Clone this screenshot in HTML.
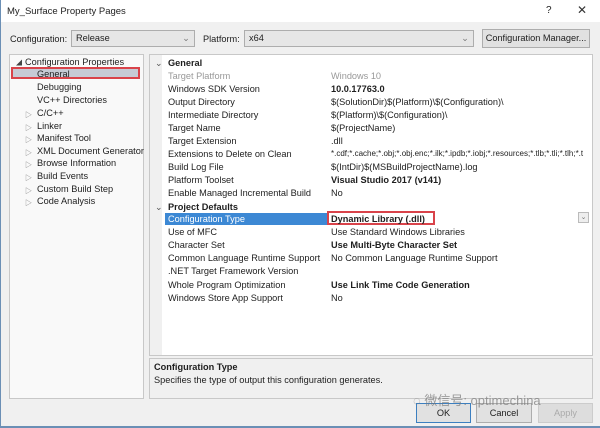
<!DOCTYPE html>
<html><head><meta charset="utf-8"><style>
*{margin:0;padding:0;box-sizing:border-box}
body{width:600px;height:428px;background:#f0f0f0;font-family:"Liberation Sans","Noto Sans CJK SC",sans-serif;font-size:9.2px;color:#1e1e1e;position:relative;overflow:hidden;border-left:1px solid #6b8fb5;border-bottom:2px solid #6b8fb5}
.a{position:absolute;white-space:nowrap}
.box{position:absolute;border:1px solid #c8c8c8}
.combo{position:absolute;background:#e6e6e6;border:1px solid #adadad;height:17px;padding:2px 4px}
.btn{position:absolute;background:#e1e1e1;border:1px solid #adadad;text-align:center;line-height:18px;height:20px}
.r{position:absolute;left:167px;white-space:nowrap}
.v{position:absolute;left:330px;white-space:nowrap}
b{font-weight:bold}
.t{position:absolute;left:36px;white-space:nowrap}
.tri{position:absolute;left:24px;color:#777;font-size:7px}
</style></head><body>
<div class="a" style="left:0;top:0;width:600px;height:22px;background:#fff"></div>
<div class="a" style="left:6px;top:6px;font-size:9.5px">My_Surface Property Pages</div>
<div class="a" style="left:545px;top:5px;font-size:10px">?</div>
<div class="a" style="left:576px;top:3px;font-size:12px;color:#333">✕</div>

<div class="a" style="left:9px;top:34px">Configuration:</div>
<div class="combo" style="left:70px;top:30px;width:124px">Release<span style="position:absolute;right:4px;color:#777">⌄</span></div>
<div class="a" style="left:202px;top:34px">Platform:</div>
<div class="combo" style="left:243px;top:30px;width:230px">x64<span style="position:absolute;right:4px;color:#777">⌄</span></div>
<div class="btn" style="left:481px;top:29px;width:108px;height:19px;line-height:17px">Configuration Manager...</div>

<div class="box" style="left:8px;top:54px;width:135px;height:345px;background:#f9f9f9"></div>
<div class="a" style="left:15px;top:58px;font-size:6px;color:#444">◢</div>
<div class="a" style="left:24px;top:57px">Configuration Properties</div>
<div class="a" style="left:10px;top:67px;width:129px;height:12px;background:#c6cbd5;border:2px solid #d9434a"></div>
<div class="t" style="top:69px">General</div>
<div class="t" style="top:82px">Debugging</div>
<div class="t" style="top:95px">VC++ Directories</div>
<div class="tri" style="top:110px">▷</div><div class="t" style="top:108px">C/C++</div>
<div class="tri" style="top:123px">▷</div><div class="t" style="top:121px">Linker</div>
<div class="tri" style="top:135px">▷</div><div class="t" style="top:133px">Manifest Tool</div>
<div class="tri" style="top:148px">▷</div><div class="t" style="top:146px">XML Document Generator</div>
<div class="tri" style="top:160px">▷</div><div class="t" style="top:158px">Browse Information</div>
<div class="tri" style="top:173px">▷</div><div class="t" style="top:171px">Build Events</div>
<div class="tri" style="top:186px">▷</div><div class="t" style="top:184px">Custom Build Step</div>
<div class="tri" style="top:198px">▷</div><div class="t" style="top:196px">Code Analysis</div>

<div class="box" style="left:148px;top:54px;width:444px;height:302px;background:#fff;overflow:hidden">
<div class="a" style="left:0;top:0;width:12px;height:300px;background:#f0f0f0"></div>
</div>
<div class="a" style="left:154px;top:58px;color:#555">⌄</div>
<div class="r" style="left:167px;top:58px"><b>General</b></div>
<div class="r" style="top:71px;color:#999">Target Platform</div><div class="v" style="top:71px;color:#999">Windows 10</div>
<div class="r" style="top:84px">Windows SDK Version</div><div class="v" style="top:84px"><b>10.0.17763.0</b></div>
<div class="r" style="top:97px">Output Directory</div><div class="v" style="top:97px">$(SolutionDir)$(Platform)\$(Configuration)\</div>
<div class="r" style="top:110px">Intermediate Directory</div><div class="v" style="top:110px">$(Platform)\$(Configuration)\</div>
<div class="r" style="top:123px">Target Name</div><div class="v" style="top:123px">$(ProjectName)</div>
<div class="r" style="top:136px">Target Extension</div><div class="v" style="top:136px">.dll</div>
<div class="r" style="top:149px">Extensions to Delete on Clean</div><div class="v" style="top:149px;width:262px;overflow:hidden;font-size:8px">*.cdf;*.cache;*.obj;*.obj.enc;*.ilk;*.ipdb;*.iobj;*.resources;*.tlb;*.tli;*.tlh;*.t</div>
<div class="r" style="top:162px">Build Log File</div><div class="v" style="top:162px">$(IntDir)$(MSBuildProjectName).log</div>
<div class="r" style="top:175px">Platform Toolset</div><div class="v" style="top:175px"><b>Visual Studio 2017 (v141)</b></div>
<div class="r" style="top:188px">Enable Managed Incremental Build</div><div class="v" style="top:188px">No</div>
<div class="a" style="left:154px;top:202px;color:#555">⌄</div>
<div class="r" style="top:202px"><b>Project Defaults</b></div>
<div class="a" style="left:164px;top:213px;width:162px;height:12px;background:#3c88d4"></div>
<div class="r" style="top:214px;color:#fff">Configuration Type</div>
<div class="a" style="left:326px;top:211px;width:108px;height:14px;border:2px solid #d9434a"></div>
<div class="v" style="top:214px"><b>Dynamic Library (.dll)</b></div>
<div class="a" style="left:577px;top:212px;width:11px;height:11px;border:1px solid #bbb;background:#eee;color:#777;font-size:7px;text-align:center;line-height:9px">⌄</div>
<div class="r" style="top:227px">Use of MFC</div><div class="v" style="top:227px">Use Standard Windows Libraries</div>
<div class="r" style="top:240px">Character Set</div><div class="v" style="top:240px"><b>Use Multi-Byte Character Set</b></div>
<div class="r" style="top:253px">Common Language Runtime Support</div><div class="v" style="top:253px">No Common Language Runtime Support</div>
<div class="r" style="top:266px">.NET Target Framework Version</div>
<div class="r" style="top:280px">Whole Program Optimization</div><div class="v" style="top:280px"><b>Use Link Time Code Generation</b></div>
<div class="r" style="top:293px">Windows Store App Support</div><div class="v" style="top:293px">No</div>

<div class="box" style="left:148px;top:358px;width:444px;height:41px;background:#f0f0f0"></div>
<div class="a" style="left:153px;top:362px"><b>Configuration Type</b></div>
<div class="a" style="left:153px;top:375px">Specifies the type of output this configuration generates.</div>

<div class="btn" style="left:415px;top:403px;width:55px;border:1px solid #3c7fc0">OK</div>
<div class="btn" style="left:475px;top:403px;width:56px">Cancel</div>
<div class="btn" style="left:537px;top:403px;width:55px;color:#aaa;background:#ddd;border-color:#ccc">Apply</div>
<div class="a" style="left:412px;top:390px;font-size:13px;color:rgba(120,120,120,0.7)">◌ 微信号: optimechina</div>
</body></html>
